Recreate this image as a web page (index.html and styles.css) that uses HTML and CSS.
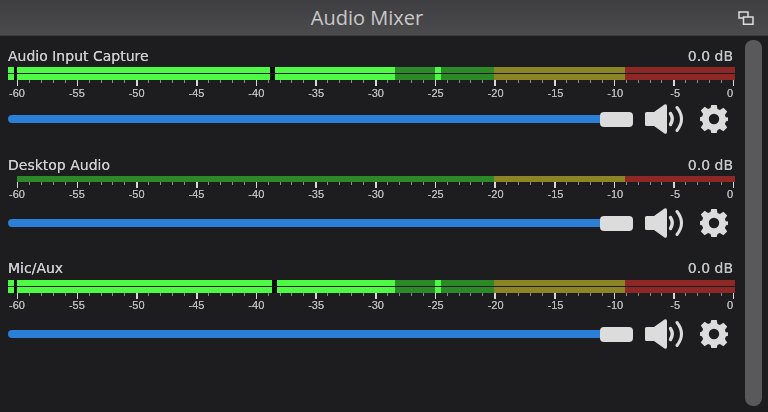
FILE: index.html
```html
<!DOCTYPE html>
<html lang="en">
<head>
  <meta charset="UTF-8" />
  <title>Audio Mixer</title>
  <link rel="stylesheet" href="styles.css">
</head>
<body>
  <svg class="defs" width="0" height="0">
    <symbol id="speaker" viewBox="0 0 39 30">
      <path d="M0 9.500Q0 8 1.500 8H9L19.500 0.500Q22 -0.500 22 2V28Q22 30.500 19.500 29.500L9 22H1.500Q0 22 0 20.500Z" fill="#dcdcdc"/>
      <path d="M25.500 9.500Q29 15 25.500 20.500" fill="none" stroke="#dcdcdc" stroke-width="3.400" stroke-linecap="round"/>
      <path d="M32 3.500Q41 15 32 26.500" fill="none" stroke="#dcdcdc" stroke-width="3" stroke-linecap="round"/>
    </symbol>
    <symbol id="gear" viewBox="0 0 30 30">
      <path fill="#dcdcdc" fill-rule="evenodd" d="M12.300 1H17.700L18.500 5.100L20.900 6.100L24.400 3.800L28.200 7.600L25.900 11.100L26.900 13.500L29 13.300V16.700L26.900 17.500L25.900 19.900L28.200 23.400L24.400 27.200L20.900 24.900L18.500 25.900L17.700 29H12.300L11.500 25.900L9.100 24.900L5.600 27.200L1.800 23.400L4.100 19.900L3.100 17.500L1 16.700V13.300L3.100 12.500L4.100 10.100L1.800 6.600L5.600 2.800L9.100 5.100L11.500 4.100ZM15 9.800A5.200 5.200 0 1 0 15 20.200A5.200 5.200 0 1 0 15 9.800Z"/>
    </symbol>
  </svg>

  <div class="dock">
    <header class="titlebar">
      <span class="title">Audio Mixer</span>
      <svg class="undock" viewBox="0 0 16 14" width="16" height="14">
        <path d="M1 1H10V7H1Z" fill="none" stroke="#dcdcdc" stroke-width="1.500"/>
        <path d="M5.500 6H15V13.300H5.500Z" fill="#47464a" stroke="#dcdcdc" stroke-width="1.500"/>
      </svg>
    </header>

    <div class="content">
      <main class="channels">
        <section class="channel ch-input">
          <div class="head"><span>Audio Input Capture</span><span class="db">0.0 dB</span></div>
          <div class="meter">
            <div class="meter-row">
              <i class="seg lit w6"></i><i class="seg gap w3"></i><i class="seg lit w253"></i><i class="seg gap w5"></i><i class="seg lit w120"></i><i class="seg green w40"></i><i class="seg lit w6"></i><i class="seg green w53"></i><i class="seg yellow w131"></i><i class="seg red w110"></i>
            </div>
            <div class="meter-row">
              <i class="seg lit w6"></i><i class="seg gap w3"></i><i class="seg lit w253"></i><i class="seg gap w5"></i><i class="seg lit w120"></i><i class="seg green w40"></i><i class="seg lit w6"></i><i class="seg green w53"></i><i class="seg yellow w131"></i><i class="seg red w110"></i>
            </div>
          </div>
          <div class="ticks"></div>
          <div class="scale"><span>-60</span><span>-55</span><span>-50</span><span>-45</span><span>-40</span><span>-35</span><span>-30</span><span>-25</span><span>-20</span><span>-15</span><span>-10</span><span>-5</span><span>0</span></div>
          <div class="controls">
            <div class="slider"><div class="track"></div><div class="thumb"></div></div>
            <svg class="speaker"><use href="#speaker"/></svg>
            <svg class="gear"><use href="#gear"/></svg>
          </div>
        </section>

        <section class="channel ch-desktop">
          <div class="head"><span>Desktop Audio</span><span class="db">0.0 dB</span></div>
          <div class="meter thin">
            <div class="meter-row">
              <i class="seg gap w9"></i><i class="seg green w477"></i><i class="seg yellow w131"></i><i class="seg red w110"></i>
            </div>
          </div>
          <div class="ticks"></div>
          <div class="scale"><span>-60</span><span>-55</span><span>-50</span><span>-45</span><span>-40</span><span>-35</span><span>-30</span><span>-25</span><span>-20</span><span>-15</span><span>-10</span><span>-5</span><span>0</span></div>
          <div class="controls">
            <div class="slider"><div class="track"></div><div class="thumb"></div></div>
            <svg class="speaker"><use href="#speaker"/></svg>
            <svg class="gear"><use href="#gear"/></svg>
          </div>
        </section>

        <section class="channel ch-mic">
          <div class="head"><span>Mic/Aux</span><span class="db">0.0 dB</span></div>
          <div class="meter">
            <div class="meter-row">
              <i class="seg lit w6"></i><i class="seg gap w3"></i><i class="seg lit w255"></i><i class="seg gap w5"></i><i class="seg lit w118"></i><i class="seg green w40"></i><i class="seg lit w6"></i><i class="seg green w53"></i><i class="seg yellow w131"></i><i class="seg red w110"></i>
            </div>
            <div class="meter-row">
              <i class="seg lit w6"></i><i class="seg gap w3"></i><i class="seg lit w255"></i><i class="seg gap w5"></i><i class="seg lit w118"></i><i class="seg green w40"></i><i class="seg lit w6"></i><i class="seg green w53"></i><i class="seg yellow w131"></i><i class="seg red w110"></i>
            </div>
          </div>
          <div class="ticks"></div>
          <div class="scale"><span>-60</span><span>-55</span><span>-50</span><span>-45</span><span>-40</span><span>-35</span><span>-30</span><span>-25</span><span>-20</span><span>-15</span><span>-10</span><span>-5</span><span>0</span></div>
          <div class="controls">
            <div class="slider"><div class="track"></div><div class="thumb"></div></div>
            <svg class="speaker"><use href="#speaker"/></svg>
            <svg class="gear"><use href="#gear"/></svg>
          </div>
        </section>
      </main>

      <div class="scrollbar"><div class="scroll-handle"></div></div>
    </div>
  </div>
</body>
</html>
```

FILE: styles.css
```css
* {
  box-sizing: border-box;
}

html, body {
  margin: 0;
  height: 100%;
  overflow: hidden;
}

body {
  font-family: "Open Sans", sans-serif;
  background: #1d1c1f;
  color: #c8c8c8;
}

.defs {
  display: block;
  height: 0;
}

.dock {
  height: 412px;
  display: flex;
  flex-direction: column;
  filter: blur(0.35px);
}

.titlebar {
  height: 36px;
  flex: none;
  display: flex;
  align-items: center;
  justify-content: center;
  position: relative;
  background: linear-gradient(to bottom, #3f3e41, #4b4a4d);
  border-bottom: 1px solid #3a393c;
}

.title {
  font-size: 20px;
  color: #c9c9c9;
  margin-top: -1px;
  margin-left: -34px;
}

.undock {
  position: absolute;
  left: 738px;
  top: 11px;
}

.content {
  flex: 1;
  display: flex;
  min-height: 0;
}

.channels {
  width: 745px;
  flex: none;
  padding: 10px 10px 0 8px;
}

.channel {
  height: 103px;
}

.ch-input {
  height: 109px;
}

.head {
  display: flex;
  justify-content: space-between;
  height: 21px;
  padding-right: 2px;
  font-family: "DejaVu Sans", sans-serif;
  font-size: 14px;
  line-height: 20px;
  color: #d0d0d0;
  text-shadow: 0 0 0.6px #d0d0d0;
}

.ch-mic .head {
  height: 22px;
}

.db {
  color: #c4c8cc;
}

.meter {
  display: flex;
  flex-direction: column;
  gap: 1.500px;
  height: 13px;
}

.meter.thin {
  height: 6px;
}

.meter-row {
  flex: 1;
  display: flex;
}

.seg {
  display: block;
  flex: none;
}

.lit { background: #4dfa44; }
.gap { background: #0a0a0a; }
.green { background: #2b8a27; }
.yellow { background: #8b8526; }
.red { background: #8e2826; }

.ch-desktop .gap { background: transparent; }

.w3 { width: 3px; }
.w5 { width: 5px; }
.w6 { width: 6px; }
.w9 { width: 9px; }
.w40 { width: 40px; }
.w53 { width: 53px; }
.w110 { width: 110px; }
.w118 { width: 118px; }
.w120 { width: 120px; }
.w131 { width: 131px; }
.w253 { width: 253px; }
.w255 { width: 255px; }
.w477 { width: 477px; }

.ticks {
  height: 6px;
  margin-left: 9px;
  width: 717px;
  background:
    repeating-linear-gradient(to right, #d8d8d8 0 1.500px, transparent 1.500px 59.670px) 0 0 / 100% 6px no-repeat,
    repeating-linear-gradient(to right, #8c8c8c 0 1px, transparent 1px 11.934px) 0 0 / 100% 3px no-repeat;
}

.scale {
  display: flex;
  justify-content: space-between;
  width: 727px;
  height: 10px;
  margin-top: 1px;
  padding-right: 1px;
  font-size: 11px;
  line-height: 10px;
  font-family: "Liberation Sans", sans-serif;
  color: #bdbdbd;
  text-shadow: 0 0 0.6px #bdbdbd;
}

.ch-input .scale {
  margin-top: 2px;
}

.scale span {
  width: 18px;
  text-align: center;
}

.scale span:last-child {
  width: 8px;
}

.controls {
  display: flex;
  align-items: center;
  margin-top: 9px;
  height: 30px;
}

.ch-input .controls {
  margin-top: 6px;
}

.slider {
  width: 625px;
  display: flex;
  align-items: center;
}

.track {
  flex: 1;
  height: 8px;
  background: #2b7fd6;
  border-radius: 4px 0 0 4px;
}

.thumb {
  width: 33px;
  height: 15px;
  background: #dcdcdc;
  border-radius: 4px;
}

.speaker {
  width: 39px;
  height: 30px;
  margin-left: 12px;
}

.gear {
  width: 30px;
  height: 30px;
  margin-left: 15px;
}

.scrollbar {
  width: 23px;
  flex: none;
  padding: 4px 6px 6px 0;
}

.scroll-handle {
  height: 100%;
  background: #59585b;
  border-radius: 8px;
}
```
